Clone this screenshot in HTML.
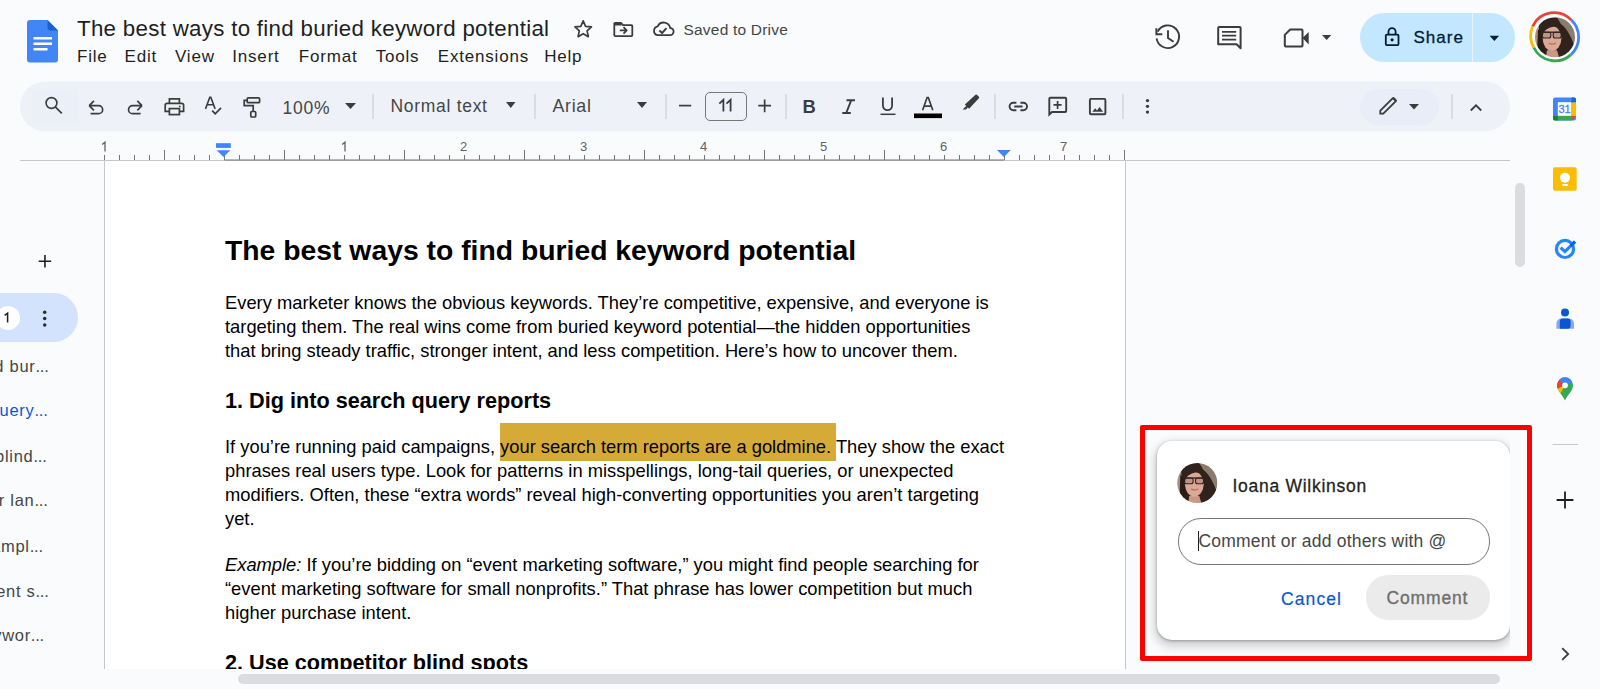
<!DOCTYPE html>
<html><head><meta charset="utf-8">
<style>
*{margin:0;padding:0;box-sizing:border-box}
html,body{width:1600px;height:689px;overflow:hidden;background:#f9fbfd;font-family:"Liberation Sans",sans-serif;color:#1f1f1f}
.a{position:absolute;white-space:pre}
#tb{position:absolute;left:20px;top:82px;width:1490px;height:49px;border-radius:24.5px;background:#eef2f8}
.sep{position:absolute;top:94px;width:2px;height:25px;background:#d9dce1;margin-left:-0.5px}
#page{position:absolute;left:104px;top:161px;width:1022px;height:508px;background:#fff;border-left:1px solid #c7c7c7;border-right:1px solid #c7c7c7;overflow:hidden}
.doc{position:absolute;font-family:"Liberation Sans",sans-serif;color:#000;white-space:pre}
.body{font-size:18.33px;line-height:24px}
.ol{position:absolute;right:1553px;font-size:16.5px;color:#444746;line-height:20px;white-space:pre}
</style></head><body>

<!-- header -->
<div class="a" style="left:77px;top:16.7px;font-size:22.3px;line-height:24px;letter-spacing:0.3px;color:#1f1f1f">The best ways to find buried keyword potential</div>
<div class="a" style="left:683.5px;top:21.5px;font-size:15.5px;line-height:16px;letter-spacing:0.2px;color:#444746">Saved to Drive</div>
<div class="a" style="left:77px;top:48px;font-size:17px;line-height:17px;letter-spacing:0.8px;color:#1f1f1f">File</div>
<div class="a" style="left:124.5px;top:48px;font-size:17px;line-height:17px;letter-spacing:0.8px">Edit</div>
<div class="a" style="left:175px;top:48px;font-size:17px;line-height:17px;letter-spacing:0.8px">View</div>
<div class="a" style="left:232.3px;top:48px;font-size:17px;line-height:17px;letter-spacing:0.8px">Insert</div>
<div class="a" style="left:298.8px;top:48px;font-size:17px;line-height:17px;letter-spacing:0.8px">Format</div>
<div class="a" style="left:375.7px;top:48px;font-size:17px;line-height:17px;letter-spacing:0.8px">Tools</div>
<div class="a" style="left:437.8px;top:48px;font-size:17px;line-height:17px;letter-spacing:0.8px">Extensions</div>
<div class="a" style="left:544.2px;top:48px;font-size:17px;line-height:17px;letter-spacing:0.8px">Help</div>

<!-- share button -->
<div class="a" style="left:1360px;top:12.5px;width:155px;height:49.5px;border-radius:25px;background:#c2e7ff"></div>
<div class="a" style="left:1472px;top:12.5px;width:1px;height:49.5px;background:#f9fbfd;opacity:.7"></div>
<div class="a" style="left:1413.5px;top:29px;font-size:17px;line-height:17px;letter-spacing:1px;-webkit-text-stroke:0.3px #001d35;color:#001d35">Share</div>

<!-- toolbar -->
<svg class="a" style="left:0;top:0" width="1600" height="140"><rect x="20" y="81.5" width="1490" height="50" rx="25" fill="#eef2f8"/></svg>
<div class="a" style="left:32px;top:88.5px;width:46px;height:34px;background:#eaeff8;border-radius:0"></div>
<div class="a" style="left:1360px;top:88.5px;width:79px;height:36px;border-radius:18px;background:#e8edf8"></div>
<div class="sep" style="left:372px"></div>
<div class="sep" style="left:534px"></div>
<div class="sep" style="left:665px"></div>
<div class="sep" style="left:785px"></div>
<div class="sep" style="left:994px"></div>
<div class="sep" style="left:1122px"></div>
<div class="sep" style="left:1451px"></div>
<div class="a" style="left:282.5px;top:100px;font-size:17.5px;line-height:17px;letter-spacing:0.8px;color:#444746">100%</div>
<div class="a" style="left:390.5px;top:97.5px;font-size:17.5px;line-height:17px;letter-spacing:0.7px;color:#444746">Normal text</div>
<div class="a" style="left:552.5px;top:97.5px;font-size:17.8px;line-height:17px;letter-spacing:0.7px;color:#444746">Arial</div>
<div class="a" style="left:705px;top:92px;width:42px;height:28.5px;border:1px solid #747775;border-radius:5px"></div>


<!-- ruler -->
<div class="a" style="left:20px;top:160px;width:1490px;height:1px;background:#c7c7c7"></div>

<!-- page -->
<div id="page">
  <div class="a" style="left:395px;top:262px;width:336px;height:38px;background:#d5aa37"></div>
  <div class="doc" style="left:120px;top:75px;font-size:28.33px;line-height:28.33px;font-weight:bold">The best ways to find buried keyword potential</div>
  <div class="doc body" style="left:120px;top:130.4px">Every marketer knows the obvious keywords. They’re competitive, expensive, and everyone is
targeting them. The real wins come from buried keyword potential—the hidden opportunities
that bring steady traffic, stronger intent, and less competition. Here’s how to uncover them.</div>
  <div class="doc" style="left:120px;top:228.7px;font-size:21.67px;line-height:21.67px;font-weight:bold">1. Dig into search query reports</div>
  <div class="doc body" style="left:120px;top:274.2px">If you’re running paid campaigns, your search term reports are a goldmine. They show the exact
phrases real users type. Look for patterns in misspellings, long-tail queries, or unexpected
modifiers. Often, these “extra words” reveal high-converting opportunities you aren’t targeting
yet.</div>
  <div class="doc body" style="left:120px;top:391.7px"><i>Example:</i> If you’re bidding on “event marketing software,” you might find people searching for
“event marketing software for small nonprofits.” That phrase has lower competition but much
higher purchase intent.</div>
  <div class="doc" style="left:120px;top:491px;font-size:21.67px;line-height:21.67px;font-weight:bold">2. Use competitor blind spots</div>
</div>

<!-- left outline -->
<div class="a" style="left:0;top:293px;width:78px;height:49px;border-radius:0 25px 25px 0;background:#d3e3fd"></div>
<div class="a" style="left:-4px;top:306px;width:24px;height:24px;border-radius:12px;background:#fff"></div>
<svg class="a" style="left:0;top:300px" width="30" height="30"><path d="M4.6,15.4L7.6,13.2V22.4" fill="none" stroke="#1f1f1f" stroke-width="1.5"/></svg>

<div class="ol" style="right:1551.4px;top:355.5px"><span style="letter-spacing:0.7px">find bur</span><span style="letter-spacing:-0.2px">...</span></div>
<div class="ol" style="right:1552.4px;top:400.3px;color:#0b57d0"><span style="letter-spacing:0.7px">query</span><span style="letter-spacing:-0.2px">...</span></div>
<div class="ol" style="right:1553.4px;top:445.6px"><span style="letter-spacing:0.7px">blind</span><span style="letter-spacing:-0.2px">...</span></div>
<div class="ol" style="right:1552.4px;top:490.3px"><span style="letter-spacing:0.7px">your lan</span><span style="letter-spacing:-0.2px">...</span></div>
<div class="ol" style="right:1557.2px;top:535.7px"><span style="letter-spacing:0.7px">Exampl</span><span style="letter-spacing:-0.2px">...</span></div>
<div class="ol" style="right:1551.4px;top:580.6px"><span style="letter-spacing:0.7px">Content s</span><span style="letter-spacing:-0.2px">...</span></div>
<div class="ol" style="right:1556px;top:624.8px"><span style="letter-spacing:0.7px">keywor</span><span style="letter-spacing:-0.2px">...</span></div>

<!-- scrollbars -->
<div class="a" style="left:1515px;top:183px;width:10px;height:84px;border-radius:5px;background:#dadce0"></div>
<div class="a" style="left:238px;top:674px;width:1262px;height:10px;border-radius:5px;background:#dadce0"></div>

<!-- comment card -->
<div class="a" style="left:1140px;top:425px;width:392px;height:236px;border:5px solid #ff0000;border-radius:2px"></div>
<div class="a" style="left:1145px;top:430px;width:365px;height:226px;overflow:hidden">
  <div class="a" style="left:12px;top:10.5px;width:353px;height:199px;border-radius:15px;background:#fff;box-shadow:0 4px 8px 3px rgba(0,0,0,.16),0 1px 3px rgba(0,0,0,.3)"></div>
</div>
<div class="a" style="left:1232.5px;top:478px;font-size:17.5px;line-height:17px;letter-spacing:0.72px;-webkit-text-stroke:0.3px #1f1f1f;color:#1f1f1f">Ioana Wilkinson</div>
<div class="a" style="left:1177.5px;top:518px;width:312.5px;height:46.5px;border:1px solid #747775;border-radius:23px"></div>
<div class="a" style="left:1198px;top:531px;width:1px;height:20px;background:#1f1f1f"></div>
<div class="a" style="left:1198.5px;top:532px;font-size:17.5px;line-height:18px;letter-spacing:0.2px;color:#444746">Comment or add others with @</div>
<div class="a" style="left:1281px;top:589.5px;font-size:17.5px;line-height:18px;letter-spacing:1.1px;-webkit-text-stroke:0.2px #0b57d0;color:#0b57d0">Cancel</div>
<div class="a" style="left:1366px;top:575px;width:124px;height:44.5px;border-radius:22px;background:#ebebeb"></div>
<div class="a" style="left:1386.5px;top:589px;font-size:17.5px;line-height:18px;letter-spacing:0.85px;-webkit-text-stroke:0.35px #6f6f6f;color:#6f6f6f">Comment</div>

<svg class="a" style="left:0;top:0;overflow:visible" width="1600" height="689" viewBox="0 0 1600 689">
<!-- docs logo -->
<path d="M30,20H47.5L58,30.5V59.5a3,3 0 0 1-3,3H30a3,3 0 0 1-3-3V23a3,3 0 0 1 3-3Z" fill="#4285f4"/>
<path d="M47.5,20L58,30.5H50.5a3,3 0 0 1-3-3Z" fill="#1b5fd4"/>
<path d="M33.5,38.2H52M33.5,43.7H52M33.5,49.2H47.5" stroke="#fff" stroke-width="2.5"/>
<g fill="none" stroke="#3b3d3d" stroke-width="1.6" stroke-linejoin="round">
<!-- star -->
<path d="M583.20,20.90 L585.60,26.29 L591.47,26.91 L587.09,30.86 L588.31,36.64 L583.20,33.69 L578.09,36.64 L579.31,30.86 L574.93,26.91 L580.80,26.29Z" stroke-width="1.7"/>
<!-- folder -->
<path d="M614.3,35.2V23.7a0.9,0.9 0 0 1 .9-.9H621l2,2.3h8.4a0.9,0.9 0 0 1 .9.9v9.2a0.9,0.9 0 0 1-.9.9H615.2a0.9,0.9 0 0 1-.9-.9Z" stroke-width="1.8"/>
<path d="M614.3,24.2H621.5" stroke-width="2.6"/>
<path d="M619.8,30.4H626.6M623.5,27.2L626.7,30.4L623.5,33.6" stroke-width="1.8"/>
<!-- cloud -->
<path d="M657.5,35.2H669.8a3.6,3.6 0 0 0 .4-7.2a6.6,6.6 0 0 0-12.5-1.6a4.5,4.5 0 0 0-.2,8.8Z" stroke-width="1.8"/>
<path d="M659.4,30.5L662.1,33L666.5,28.2" stroke-width="1.9"/>
<!-- history -->
<path d="M1157.7,31.6A11.3,11.3 0 1 1 1156.6,38.4" stroke-width="1.9"/>
<path d="M1156.4,28.2V34.3H1162.3" stroke-width="2" stroke-linejoin="miter"/>
<path d="M1168,30.3V38.1L1173.6,41.8" stroke-width="1.9" stroke-linejoin="miter"/>
<!-- comments -->
<path d="M1218.2,44.3V27.9a1,1 0 0 1 1-1H1239.6a1,1 0 0 1 1,1V48.3L1236.6,44.3H1219.2a1,1 0 0 1-1-1Z" stroke-width="2"/>
<path d="M1222,31.9H1236.2M1222,35.7H1236.2M1222,39.6H1236.2" stroke-width="1.7"/>
<!-- meet -->
<path d="M1284.8,34.9V45.6a1,1 0 0 0 1,1H1301.5a1,1 0 0 0 1-1V30.5a1,1 0 0 0-1-1H1290.2Z" stroke-width="2"/>
</g>
<path d="M1302.5,37.9L1308.7,32V44.4Z" fill="#3b3d3d"/>
<!-- lock -->
<g fill="none" stroke="#001d35" stroke-width="1.8">
<rect x="1385.8" y="34.7" width="12.7" height="10.4" rx="1"/>
<path d="M1388.5,34.7V31.6a3.55,3.55 0 0 1 7.1,0V34.7"/>
</g>
<circle cx="1392.1" cy="39.8" r="1.6" fill="#001d35"/>
<!-- drop triangles -->
<g fill="#3b3d3d">
<path d="M1322,35H1331.3L1326.65,40Z"/>
<path d="M345,103H356L350.5,109Z"/>
<path d="M506,102H515.5L510.75,108Z"/>
<path d="M637,102H647L642,108Z"/>
<path d="M1409,104H1419L1414,109.5Z"/>
</g>
<path d="M1489.6,35.8H1499.1L1494.35,40.9Z" fill="#001d35"/>

<!-- toolbar icons -->
<g fill="none" stroke="#3b3d3d" stroke-width="1.7">
<!-- search -->
<circle cx="51.5" cy="103" r="5.4" stroke-width="1.6"/>
<path d="M55.3,106.8L61.8,113.3" stroke-width="1.7"/>
<!-- undo -->
<path d="M89.2,105.6L93.9,100.9M89.2,105.6L93.9,110.3M89.6,105.6H98.6a4.05,4.05 0 0 1 0,8.1H90.6"/>
<!-- redo -->
<path d="M142,105.6L137.3,100.9M142,105.6L137.3,110.3M141.6,105.6H132.6a4.05,4.05 0 0 0 0,8.1H140.6"/>
<!-- print -->
<path d="M169.4,103.3V98.9H179.4V103.3" />
<path d="M169.4,111.3H165.2V105.3a2,2 0 0 1 2-2H181.6a2,2 0 0 1 2,2V111.3H179.4"/>
<rect x="169.4" y="108.6" width="10" height="6"/>
<circle cx="179.8" cy="106.4" r="0.9" fill="#3b3d3d" stroke="none"/>
<!-- spellcheck -->
<path d="M205.5,108.9L209.8,97.3H210.8L215.1,108.9M207.2,104.8H213.4" stroke-width="1.6"/>
<path d="M212.2,110.6L215.2,113.8L221,107.8" stroke-width="1.7"/>
<!-- paint format -->
<rect x="247.2" y="97.9" width="12.4" height="4.8" rx="1"/>
<path d="M247.2,100.3H244.2V105.6H253.2V111.5"/>
<rect x="250.8" y="111.5" width="4.9" height="5.5" rx="1"/>
<!-- minus plus -->
<path d="M679,105.6H691.2" stroke-width="1.7"/>
<path d="M719.3,103.6L723.4,99.8V111.6M726.5,103.6L730.6,99.8V111.6" stroke-width="1.8" stroke-linejoin="miter"/>
<path d="M758.3,105.7H771M764.65,99.4V112.2" stroke-width="1.7"/>
<!-- italic -->
<path d="M846.5,100.3H855M842.3,113H850.8M851.2,100.3L846.2,113" stroke-width="1.9"/>
<!-- underline -->
<path d="M882.9,97.6V105.6a4.6,4.6 0 0 0 9.2,0V97.6" stroke-width="1.8"/>
<path d="M880.5,114.3H895.5" stroke-width="1.5"/>
<!-- text color A -->
<path d="M922.6,110.2L927.1,97.5H928.3L932.8,110.2M924.3,106.1H931.1" stroke-width="1.7"/>
<!-- link -->
<path d="M1016.4,102.75H1013.3a3.75,3.75 0 0 0 0,7.5H1016.4M1020.4,102.75H1023.3a3.75,3.75 0 0 1 0,7.5H1020.4M1014.2,106.5H1022.6" stroke-width="1.9"/>
<!-- add comment -->
<path d="M1049.3,114.6V98.8a1,1 0 0 1 1-1H1065.2a1,1 0 0 1 1,1V111a1,1 0 0 1-1,1H1052Z" stroke-width="1.9"/>
<path d="M1057.6,100.9V109M1053.5,104.9H1061.6" stroke-width="1.7"/>
<!-- image -->
<rect x="1089.9" y="98.9" width="15.5" height="15.3" rx="1" stroke-width="1.9"/>
<!-- pencil mode -->
<path d="M1380.3,113.6V110.6L1392.6,98.3a1,1 0 0 1 1.4,0L1395.6,99.9a1,1 0 0 1 0,1.4L1383.3,113.6Z" stroke-width="1.8"/>
<!-- caret up -->
<path d="M1470.8,110.5L1476,105.3L1481.2,110.5" stroke-width="1.8"/>
</g>
<path d="M1092.3,111.7L1095.2,108.2L1097,110.4L1099.5,106.9L1103.1,111.7Z" fill="#3b3d3d"/>
<path d="M1392.2,98.7L1395.6,102.1L1397,100.7L1393.6,97.3Z" fill="#3b3d3d"/>
<text x="802.6" y="113.2" font-family="Liberation Sans" font-weight="bold" font-size="18.4" fill="#3b3d3d">B</text>
<rect x="914" y="113.5" width="28" height="4.6" fill="#000"/>
<!-- highlighter -->
<path d="M962.6,109.5L966.2,105.9L964.9,104.6L975.5,94.8a1,1 0 0 1 1.4,0L978.9,96.8a1,1 0 0 1 0,1.4L969.1,108.8L967.8,107.5L966,109.5Z" fill="#3b3d3d"/>
<g fill="#3b3d3d">
<circle cx="1147.5" cy="100.6" r="1.65"/><circle cx="1147.5" cy="106.3" r="1.65"/><circle cx="1147.5" cy="112.1" r="1.65"/>
<circle cx="44.7" cy="312.3" r="1.75" fill="#2c2c2c"/><circle cx="44.7" cy="318.6" r="1.75" fill="#2c2c2c"/><circle cx="44.7" cy="325" r="1.75" fill="#2c2c2c"/>
</g>

<!-- ruler -->
<path d="M224.5,160H1004" stroke="#747775" stroke-width="1"/>
<path d="M104.5,155V160 M119.5,155V160 M134.5,155V160 M149.5,155V160 M164.5,150V160 M179.5,155V160 M194.5,155V160 M209.5,155V160 M224.5,155V160 M239.5,155V160 M254.5,155V160 M269.5,155V160 M284.5,150V160 M299.5,155V160 M314.5,155V160 M329.5,155V160 M344.5,155V160 M359.5,155V160 M374.5,155V160 M389.5,155V160 M404.5,150V160 M419.5,155V160 M434.5,155V160 M449.5,155V160 M464.5,155V160 M479.5,155V160 M494.5,155V160 M509.5,155V160 M524.5,150V160 M539.5,155V160 M554.5,155V160 M569.5,155V160 M584.5,155V160 M599.5,155V160 M614.5,155V160 M629.5,155V160 M644.5,150V160 M659.5,155V160 M674.5,155V160 M689.5,155V160 M704.5,155V160 M719.5,155V160 M734.5,155V160 M749.5,155V160 M764.5,150V160 M779.5,155V160 M794.5,155V160 M809.5,155V160 M824.5,155V160 M839.5,155V160 M854.5,155V160 M869.5,155V160 M884.5,150V160 M899.5,155V160 M914.5,155V160 M929.5,155V160 M944.5,155V160 M959.5,155V160 M974.5,155V160 M989.5,155V160 M1004.5,150V160 M1019.5,155V160 M1034.5,155V160 M1049.5,155V160 M1064.5,155V160 M1079.5,155V160 M1094.5,155V160 M1109.5,155V160 M1124.5,150V160" stroke="#757878" stroke-width="1"/>
<g font-family="Liberation Sans" font-size="13" fill="#5f6368"><text x="463.7" y="151.2" text-anchor="middle">2</text><text x="583.7" y="151.2" text-anchor="middle">3</text><text x="703.7" y="151.2" text-anchor="middle">4</text><text x="823.7" y="151.2" text-anchor="middle">5</text><text x="943.7" y="151.2" text-anchor="middle">6</text><text x="1063.7" y="151.2" text-anchor="middle">7</text></g>
<path d="M102.2,144.6L105,142.2V151.4M342.2,144.6L345,142.2V151.4" fill="none" stroke="#5f6368" stroke-width="1.3"/>
<rect x="216" y="143.2" width="14.8" height="4.7" fill="#4285f4"/>
<path d="M216.7,150.2H230.3L223.5,156.9Z" fill="#4285f4"/>
<path d="M997,150H1010.8L1003.9,156.9Z" fill="#4285f4"/>

<!-- outline plus -->
<path d="M38.7,261.3H51.2M44.95,255.1V267.5" stroke="#1f1f1f" stroke-width="1.6"/>

<!-- side panel -->
<path d="M1552.5,444.5H1578" stroke="#c7c7c7" stroke-width="1"/>
<path d="M1556.6,500H1573.4M1565,491.6V508.4" stroke="#1f1f1f" stroke-width="1.8"/>
<path d="M1562.2,648.2L1568.2,654L1562.2,659.8" fill="none" stroke="#3b3d3d" stroke-width="1.8"/>
</svg>
<svg class="a" style="left:0;top:0" width="1600" height="689" viewBox="0 0 1600 689">
<defs>
<clipPath id="pc1"><circle cx="1555" cy="37.2" r="20"/></clipPath>
<clipPath id="pc2"><circle cx="1197.3" cy="483" r="20"/></clipPath>
<clipPath id="mapclip"><path d="M1565,400.6C1563.2,395.6 1557,391.2 1557,385.3A8,8 0 0 1 1573,385.3C1573,391.2 1566.8,395.6 1565,400.6Z"/></clipPath>
<filter id="soft"><feGaussianBlur stdDeviation="0.55"/></filter>

</defs>
<!-- header avatar ring -->
<g fill="none" stroke-width="2.8">
<path d="M1532.7,26.3A23.6,23.6 0 0 1 1571.3,20.1" stroke="#ea4335"/>
<path d="M1571.3,20.1A23.6,23.6 0 0 1 1571.0,54.6" stroke="#4285f4"/>
<path d="M1571.0,54.6A23.6,23.6 0 0 1 1533.8,47.5" stroke="#34a853"/>
<path d="M1533.8,47.5A23.6,23.6 0 0 1 1532.7,26.3" stroke="#fbbc04"/>
</g>
<g clip-path="url(#pc1)"><g transform="translate(1555,37.2)" filter="url(#soft)">
  <rect x="-20" y="-20" width="40" height="40" fill="#30211c"/>
  <path d="M2,-20H20V10C17,2 13,-8 6,-13Z" fill="#8c7b6d"/>
  <path d="M-20,-20H-16V20H-20Z" fill="#a8907e"/>
  <path d="M-8,13H2L4,20H-9Z" fill="#c99884"/>
  <ellipse cx="-3" cy="1.2" rx="9.4" ry="12.4" fill="#dba994"/>
  <path d="M-14,-3C-15,-16 6,-20 9,-7C3,-12 -7,-12.5 -13.5,-2Z" fill="#30211c"/>
  <path d="M-17,-8C-13,-6 -12,6 -9,20H-18Z" fill="#2b1d18"/>
  <path d="M4,-11C10,-4 10,9 7,20H14C16,8 14,-6 6,-13Z" fill="#30211c"/>
  <rect x="-12.8" y="-5" width="8.6" height="5.8" rx="2" fill="rgba(70,55,50,.18)" stroke="#2e2624" stroke-width="1.1"/>
  <rect x="-1.8" y="-5" width="8" height="5.8" rx="2" fill="rgba(70,55,50,.18)" stroke="#2e2624" stroke-width="1.1"/>
  <path d="M-13,-5H6.5" stroke="#2e2624" stroke-width="1.4"/>
  <path d="M-6.2,6.2Q-2.5,7.8 1,6" stroke="#b86e66" stroke-width="1.4" fill="none"/>
</g></g>
<g clip-path="url(#pc2)"><g transform="translate(1197.3,483)" filter="url(#soft)">
  <rect x="-20" y="-20" width="40" height="40" fill="#30211c"/>
  <path d="M2,-20H20V10C17,2 13,-8 6,-13Z" fill="#8c7b6d"/>
  <path d="M-20,-20H-16V20H-20Z" fill="#a8907e"/>
  <path d="M-8,13H2L4,20H-9Z" fill="#c99884"/>
  <ellipse cx="-3" cy="1.2" rx="9.4" ry="12.4" fill="#dba994"/>
  <path d="M-14,-3C-15,-16 6,-20 9,-7C3,-12 -7,-12.5 -13.5,-2Z" fill="#30211c"/>
  <path d="M-17,-8C-13,-6 -12,6 -9,20H-18Z" fill="#2b1d18"/>
  <path d="M4,-11C10,-4 10,9 7,20H14C16,8 14,-6 6,-13Z" fill="#30211c"/>
  <rect x="-12.8" y="-5" width="8.6" height="5.8" rx="2" fill="rgba(70,55,50,.18)" stroke="#2e2624" stroke-width="1.1"/>
  <rect x="-1.8" y="-5" width="8" height="5.8" rx="2" fill="rgba(70,55,50,.18)" stroke="#2e2624" stroke-width="1.1"/>
  <path d="M-13,-5H6.5" stroke="#2e2624" stroke-width="1.4"/>
  <path d="M-6.2,6.2Q-2.5,7.8 1,6" stroke="#b86e66" stroke-width="1.4" fill="none"/>
</g></g>

<!-- calendar -->
<rect x="1553" y="97.5" width="23" height="23" rx="2" fill="#4285f4"/>
<rect x="1557.8" y="102.2" width="13.7" height="13.7" fill="#fff"/>
<rect x="1571.5" y="102.2" width="4.5" height="13.7" fill="#fbbc04"/>
<rect x="1557.8" y="115.9" width="13.7" height="4.6" fill="#34a853"/>
<path d="M1553,115.9H1557.8V120.5H1555a2,2 0 0 1-2-2Z" fill="#188038"/>
<path d="M1571.5,97.5H1574a2,2 0 0 1 2,2V102.2H1571.5Z" fill="#1967d2"/>
<path d="M1571.5,115.9H1576L1571.5,120.5Z" fill="#ea4335"/>
<text x="1564.6" y="112.6" text-anchor="middle" font-family="Liberation Sans" font-size="11" fill="#4285f4" stroke="#4285f4" stroke-width="0.3">31</text>
<!-- keep -->
<rect x="1553" y="167.3" width="23.7" height="23.5" rx="2" fill="#fbbc04"/>
<circle cx="1565" cy="177.8" r="5" fill="#fff"/>
<rect x="1562.4" y="184" width="5.4" height="1.9" fill="#fff"/>
<!-- tasks -->
<circle cx="1565" cy="248.9" r="8.6" fill="none" stroke="#2684fc" stroke-width="3.2"/>
<path d="M1560.6,247.6L1564.9,251.5L1575,241.6" fill="none" stroke="#2684fc" stroke-width="3.1"/>
<path d="M1570.5,246L1575,241.6" fill="none" stroke="#0066da" stroke-width="3.1"/>
<!-- contacts -->
<path d="M1556.4,328.8V323.6a5,5 0 0 1 5-5H1569a5,5 0 0 1 5,5V328.8Z" fill="#86a9f5"/>
<path d="M1559.8,328.8V321.6a3,3 0 0 1 3-3H1567.6a3,3 0 0 1 3,3V325.8a3,3 0 0 1-3,3Z" fill="#0b57d0"/>
<circle cx="1565" cy="312.5" r="4" fill="#0b57d0"/>
<!-- maps -->
<g clip-path="url(#mapclip)">
<rect x="1550" y="370" width="30" height="35" fill="#34a853"/>
<path d="M1550,370H1580V379.5L1568.3,384L1565,385.3L1562.4,383.7L1555,376Z" fill="#4285f4"/>
<path d="M1555,376L1565,385.3L1553,391Z" fill="#ea4335"/>
<path d="M1553,391L1565,385.3L1558.5,397Z" fill="#fbbc04"/>
</g>
<circle cx="1565" cy="385.3" r="2.9" fill="#fff"/>
</svg>

</body></html>
